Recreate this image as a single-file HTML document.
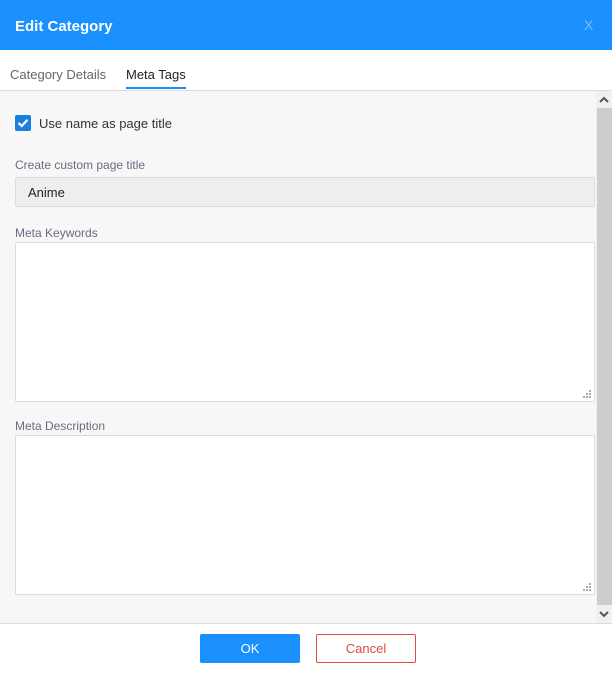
<!DOCTYPE html>
<html><head><style>
*{margin:0;padding:0;box-sizing:border-box}
body{width:612px;height:673px;overflow:hidden;font-family:"Liberation Sans",Arial,sans-serif;background:#fff;position:relative}
.hdr{position:absolute;left:0;top:0;width:612px;height:50px;background:#1a90ff}
.hdr .t{position:absolute;left:15px;top:18px;color:#fff;font-weight:bold;font-size:15px}
.hdr .x{position:absolute;left:584px;top:17px;color:#7cbcff;font-size:14px}
.tab{position:absolute;top:67px;font-size:13px}
.ul{position:absolute;left:126px;top:87px;width:60px;height:2px;background:#1a90ff}
.line{position:absolute;left:0;top:90px;width:612px;height:1px;background:#ddd}
.cont{position:absolute;left:0;top:91px;width:596px;height:532px;background:#f7f7f7}
.sb{position:absolute;left:596px;top:91px;width:16px;height:532px;background:#f0f0f0}
.thumb{position:absolute;left:597px;top:108px;width:15px;height:497px;background:#cdcdcd}
.cb{position:absolute;left:15px;top:115px;width:16px;height:16px;background:#1a7fe0;border-radius:2px}
.lbl{position:absolute;left:15px;font-size:12px;color:#6b6b80}
.box{position:absolute;left:15px;width:580px;border:1px solid #dcdcdc;background:#fff;border-radius:2px}
.foot{position:absolute;left:0;top:623px;width:612px;height:1px;background:#ddd}
.btn{position:absolute;top:634px;width:100px;height:29px;border-radius:2px;font-size:13px;text-align:center;line-height:29px}
</style></head><body>
<div class="hdr"><div class="t">Edit Category</div><div class="x">X</div></div>
<div class="tab" style="left:10px;color:#666">Category Details</div>
<div class="tab" style="left:126px;color:#222">Meta Tags</div>
<div class="ul"></div>
<div class="line"></div>
<div class="cont"></div>
<div class="sb"></div>
<div class="thumb"></div>
<svg style="position:absolute;left:598px;top:95px" width="12" height="10"><path d="M2 7 L6 3 L10 7" stroke="#555" stroke-width="2" fill="none"/></svg>
<svg style="position:absolute;left:598px;top:609px" width="12" height="10"><path d="M2 3 L6 7 L10 3" stroke="#555" stroke-width="2" fill="none"/></svg>
<div class="cb"><svg width="16" height="16"><path d="M3.5 8 L6.8 11 L12.5 4.8" stroke="#fff" stroke-width="2.2" fill="none"/></svg></div>
<div style="position:absolute;left:39px;top:116px;font-size:13px;color:#333">Use name as page title</div>
<div class="lbl" style="top:158px">Create custom page title</div>
<div class="box" style="top:177px;height:30px;background:#eee;font-size:13px;color:#222;padding:7px 0 0 12px">Anime</div>
<div class="lbl" style="top:226px">Meta Keywords</div>
<div class="box" style="top:242px;height:160px"></div>
<div class="lbl" style="top:419px">Meta Description</div>
<div class="box" style="top:435px;height:160px"></div>
<svg style="position:absolute;left:583px;top:390px" width="9" height="9"><g fill="#aaa"><rect x="6" y="0" width="2" height="2"/><rect x="3" y="3" width="2" height="2"/><rect x="6" y="3" width="2" height="2"/><rect x="0" y="6" width="2" height="2"/><rect x="3" y="6" width="2" height="2"/><rect x="6" y="6" width="2" height="2"/></g></svg>
<svg style="position:absolute;left:583px;top:583px" width="9" height="9"><g fill="#aaa"><rect x="6" y="0" width="2" height="2"/><rect x="3" y="3" width="2" height="2"/><rect x="6" y="3" width="2" height="2"/><rect x="0" y="6" width="2" height="2"/><rect x="3" y="6" width="2" height="2"/><rect x="6" y="6" width="2" height="2"/></g></svg>
<div class="foot"></div>
<div class="btn" style="left:200px;background:#1a90ff;color:#fff">OK</div>
<div class="btn" style="left:316px;border:1px solid #e04a3f;color:#e04a3f;line-height:27px">Cancel</div>
</body></html>
